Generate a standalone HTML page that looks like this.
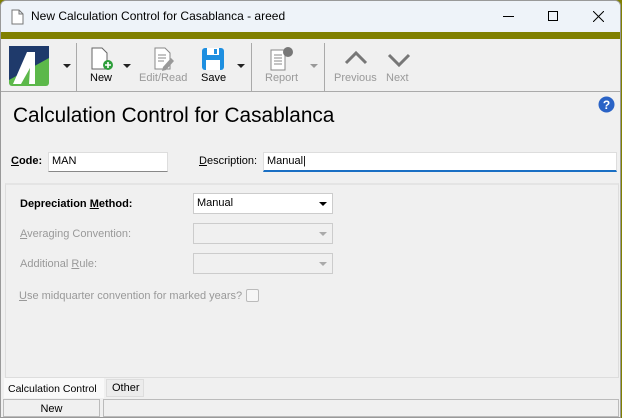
<!DOCTYPE html>
<html><head><style>
*{margin:0;padding:0;box-sizing:border-box}
body{width:622px;height:418px;overflow:hidden;background:#808000;font-family:"Liberation Sans",sans-serif;font-size:11px;color:#000;position:relative}
.win{position:absolute;left:0;top:0;width:621px;height:418px;background:#f0f0f0;border:1px solid #999;border-radius:6px 6px 0 0;overflow:hidden}
.title{position:absolute;left:0;top:0;width:100%;height:31px;background:#eef3f9}
.olive{position:absolute;left:0;top:31px;width:100%;height:7px;background:#808000}
.tb{position:absolute;left:0;top:38px;width:100%;height:53px;background:#f0f0f0;border-bottom:1px solid #aaa}
.abs{position:absolute;white-space:nowrap}
.sep{position:absolute;top:42px;width:1px;height:48px;background:#aaa}
.lbl{position:absolute;top:71px;font-size:11px;text-align:center}
.g{color:#999}
.inp{position:absolute;background:#fff;border:1px solid #ddd;border-bottom:1px solid #888;height:20px;padding:2px 3px;font-size:11px}
.dd{position:absolute;background:#fff;border:1px solid #ccc;height:21px;padding:3px 3px;font-size:11px}
.dd.dis{background:#f0f0f0;border-color:#ccc}
.arr{position:absolute;right:5px;top:8px;width:0;height:0;border-left:4px solid transparent;border-right:4px solid transparent;border-top:4px solid #000}
.dis .arr{border-top-color:#aaa}
u{text-decoration:underline}
</style></head><body>
<div class="win">
<div class="title">
<svg class="abs" style="left:10px;top:8px" width="13" height="16"><path d="M1 1h7l4 4v10H1z M8 1v4h4" fill="#fff" stroke="#777"/></svg>
<div class="abs" style="left:30px;top:8px;font-size:12px">New Calculation Control for Casablanca - areed</div>
<div class="abs" style="left:502px;top:15px;width:11px;height:1px;background:#000"></div>
<div class="abs" style="left:547px;top:10px;width:10px;height:10px;border:1px solid #000"></div>
<svg class="abs" style="left:592px;top:10px" width="11" height="11"><path d="M0 0L11 11M11 0L0 11" stroke="#000"/></svg>
</div>
<div class="olive"></div>
<div class="tb"></div>
<svg class="abs" style="left:8px;top:45px" width="40" height="40"><rect width="40" height="40" rx="3" fill="#5cb84a"/><path d="M0 0H40V12L0 34Z" fill="#1f3a6b"/><path d="M4 38L18 6H26L26 38H20L21 22L12 38Z" fill="#fff"/></svg>
<div class="abs" style="left:62px;top:63px;border-left:4px solid transparent;border-right:4px solid transparent;border-top:4px solid #222"></div>
<div class="sep" style="left:75px"></div>
<svg class="abs" style="left:89px;top:46px" width="26" height="24"><path d="M2 1h10l5 5v16H2z" fill="#fff" stroke="#666"/><circle cx="18" cy="18" r="5" fill="#2e9e3b"/><path d="M15 18h6M18 15v6" stroke="#fff" stroke-width="1.6"/></svg>
<div class="lbl" style="left:89px">New</div>
<div class="abs" style="left:122px;top:63px;border-left:4px solid transparent;border-right:4px solid transparent;border-top:4px solid #222"></div>
<svg class="abs" style="left:152px;top:46px" width="24" height="24"><path d="M2 1h10l5 5v16H2z" fill="#fff" stroke="#888"/><path d="M5 8h8M5 11h8M5 14h6" stroke="#888"/><path d="M10 20l8-9 3 3-8 9-4 1z" fill="#999"/></svg>
<div class="lbl g" style="left:138px">Edit/Read</div>
<svg class="abs" style="left:200px;top:46px" width="24" height="24"><rect x="1" y="1" width="22" height="22" rx="3" fill="#1e8fe0"/><rect x="6" y="1" width="12" height="7" fill="#fff"/><rect x="13" y="2" width="3" height="5" fill="#1e8fe0"/><rect x="5" y="13" width="14" height="10" fill="#fff"/></svg>
<div class="lbl" style="left:200px">Save</div>
<div class="abs" style="left:236px;top:63px;border-left:4px solid transparent;border-right:4px solid transparent;border-top:4px solid #222"></div>
<div class="sep" style="left:250px"></div>
<svg class="abs" style="left:268px;top:45px" width="26" height="26"><path d="M2 4h14v20H2z" fill="#fff" stroke="#888"/><path d="M5 9h8M5 12h8M5 15h8M5 18h8" stroke="#888"/><circle cx="19" cy="6" r="5" fill="#777"/></svg>
<div class="lbl g" style="left:264px">Report</div>
<div class="abs" style="left:309px;top:63px;border-left:4px solid transparent;border-right:4px solid transparent;border-top:4px solid #999"></div>
<div class="sep" style="left:323px"></div>
<svg class="abs" style="left:343px;top:50px" width="24" height="14"><path d="M2 12L12 2L22 12" fill="none" stroke="#777" stroke-width="3"/></svg>
<div class="lbl g" style="left:333px">Previous</div>
<svg class="abs" style="left:386px;top:52px" width="24" height="14"><path d="M2 2L12 12L22 2" fill="none" stroke="#777" stroke-width="3"/></svg>
<div class="lbl g" style="left:385px">Next</div>
<svg class="abs" style="left:597px;top:95px" width="17" height="17"><circle cx="8.5" cy="8.5" r="8" fill="#2a63c6"/><text x="8.5" y="13" text-anchor="middle" font-family="Liberation Sans" font-weight="bold" font-size="12" fill="#fff">?</text></svg>
<div class="abs" style="left:12px;top:103px;font-size:20.8px">Calculation Control for Casablanca</div>
<div class="abs" style="left:10px;top:154px;font-weight:bold"><u>C</u>ode:</div>
<div class="inp" style="left:47px;top:151px;width:120px">MAN</div>
<div class="abs" style="left:198px;top:154px"><u>D</u>escription:</div>
<div class="inp" style="left:262px;top:151px;width:354px;border-bottom:2px solid #1a6fc4">Manual|</div>
<div class="abs" style="left:4px;top:182px;width:614px;height:195px;border:1px solid #ddd;border-top:2px solid #e4e4e4"></div>
<div class="abs" style="left:19px;top:197px;font-weight:bold">Depreciation <u>M</u>ethod:</div>
<div class="dd" style="left:192px;top:192px;width:140px">Manual<div class="arr" style="border-top-color:#000"></div></div>
<div class="abs g" style="left:19px;top:227px"><u>A</u>veraging Convention:</div>
<div class="dd dis" style="left:192px;top:222px;width:140px"><div class="arr"></div></div>
<div class="abs g" style="left:19px;top:257px">Additional <u>R</u>ule:</div>
<div class="dd dis" style="left:192px;top:252px;width:140px"><div class="arr"></div></div>
<div class="abs g" style="left:18px;top:289px"><u>U</u>se midquarter convention for marked years?</div>
<div class="abs" style="left:245px;top:288px;width:13px;height:13px;border:1px solid #bbb;border-radius:2px;background:#f6f6f6"></div>
<div class="abs" style="left:3px;top:377px;width:100px;height:20px;background:#f9f9f9;padding:5px 0 0 4px;font-size:10.5px">Calculation Control</div>
<div class="abs" style="left:105px;top:378px;width:38px;height:18px;background:#ececec;border:1px solid #ddd;padding:2px 0 0 5px">Other</div>
<div class="abs" style="left:2px;top:398px;width:97px;height:18px;border:1px solid #bbb;background:#f0f0f0;text-align:center;padding-top:3px">New</div>
<div class="abs" style="left:102px;top:398px;width:516px;height:18px;border:1px solid #bbb;background:#f0f0f0"></div>
</div>
</body></html>
